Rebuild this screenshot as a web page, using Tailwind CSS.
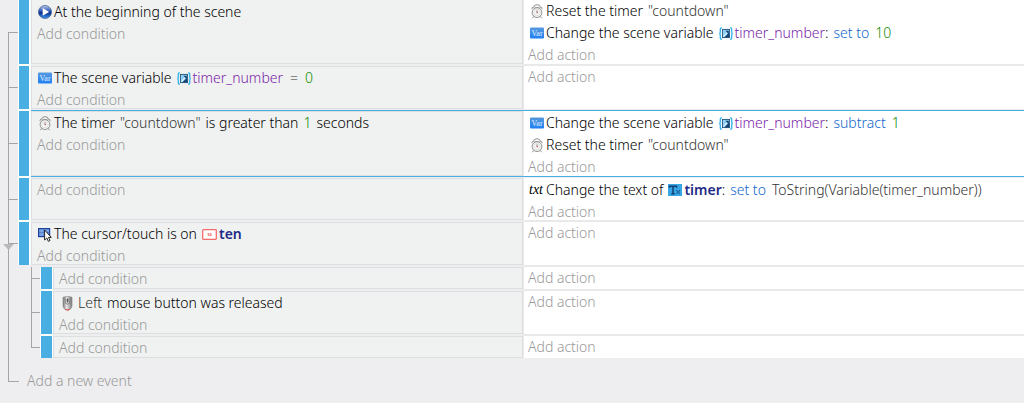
<!DOCTYPE html>
<html lang="en">
<head>
    <meta charset="UTF-8">
    <meta name="viewport" content="width=device-width, initial-scale=1.0">
    <title>Events sheet</title>
    <script src="https://cdn.jsdelivr.net/npm/@tailwindcss/browser@4"></script>
</head>
<body class="min-h-screen overflow-hidden bg-[#eeeef0] font-['Noto_Sans',sans-serif] text-[14px] leading-[22px] font-light text-black">
    <!-- icons -->
    <svg class="absolute h-0 w-0">
        <defs>
            <linearGradient id="blueBall" x1="0" y1="0" x2="0" y2="1">
                <stop offset="0" stop-color="#b9c9ea"/><stop offset=".45" stop-color="#2a55b4"/><stop offset=".55" stop-color="#0a2f8c"/><stop offset="1" stop-color="#3f9bf0"/>
            </linearGradient>
            <linearGradient id="blueBox" x1="0" y1="0" x2="0" y2="1">
                <stop offset="0" stop-color="#5599dd"/><stop offset="1" stop-color="#2080f4"/>
            </linearGradient>
            <linearGradient id="greyBody" x1="0" y1="0" x2="1" y2="0">
                <stop offset="0" stop-color="#777"/><stop offset=".4" stop-color="#e8e8e8"/><stop offset="1" stop-color="#777"/>
            </linearGradient>
        </defs>
        <symbol id="play" viewBox="0 0 15 15">
            <circle cx="7.5" cy="7.5" r="7" fill="url(#blueBall)" stroke="#4a5f94" stroke-width=".8"/>
            <path d="M5 3.2L12 7.4L5 11.6z" fill="#fff"/>
        </symbol>
        <symbol id="var" viewBox="0 0 14 12">
            <rect y=".5" width="14" height="11" rx="1" fill="url(#blueBox)"/>
            <text x="7" y="9" text-anchor="middle" font-family="Liberation Serif, serif" font-size="8" font-weight="400" fill="#e4f1ff">Var</text>
        </symbol>
        <symbol id="scenevar" viewBox="0 0 14 13">
            <path d="M3 .8H2.2Q1.3.8 1.3 2V5Q1.3 6.3.3 6.5Q1.3 6.7 1.3 8V11Q1.3 12.2 2.2 12.2H3M11 .8h.8q.9 0 .9 1.2V5q0 1.3 1 1.5q-1 .2-1 1.5V11q0 1.2-.9 1.2H11" fill="none" stroke="#35b3ec" stroke-width="1.3"/>
            <rect x="3.4" y="2.4" width="7.2" height="8.2" fill="#8fd0f4" stroke="#20507c" stroke-width=".9"/>
            <path d="M10.2 5.5V10.2H5.5z" fill="#14426e"/>
            <path d="M4.4 9.6L9.4 4.2" stroke="#fff" stroke-width="1"/>
            <path d="M6.4 3.8H9.8V7.2z" fill="#14426e"/>
        </symbol>
        <symbol id="timer" viewBox="0 0 12 15">
            <g fill="none" stroke="#858585" stroke-width=".9">
                <path d="M2.6 3.5Q2.6.7 6 .7T9.4 3.5M1 5.2Q.6 3.2 2.6 3M11 5.2Q11.4 3.2 9.4 3M3.5 3.8H8.5"/>
                <circle cx="6" cy="8.6" r="4.9" fill="#f6f6f6"/>
                <circle cx="6" cy="8.6" r="3.2" stroke="#c5c5c5" stroke-width=".5"/>
                <path d="M2.6 12.4L1.4 14.2M9.4 12.4L10.6 14.2M6 8.6V6.3"/>
            </g>
            <circle cx="6.3" cy="8.6" r=".8" fill="#c66"/>
        </symbol>
        <symbol id="cursor" viewBox="0 0 14 15">
            <rect x=".6" y="1.6" width="11" height="8" fill="#7ba4e4" stroke="#1c3f9c" stroke-width="1.2"/>
            <path d="M1 5.6H11.4M6 2V9.4" stroke="#466fc4" stroke-width=".7"/>
            <path d="M6.6 3V13L8.8 11L10.3 14.3L12 13.5L10.5 10.4H13.3z" fill="#fff" stroke="#111" stroke-width=".9"/>
        </symbol>
        <symbol id="ten" viewBox="0 0 15 11">
            <rect x=".7" y=".7" width="13.6" height="9.6" rx=".8" fill="#fff" stroke="#f56a6a" stroke-width="1.3"/>
            <text x="7.5" y="7.2" text-anchor="middle" font-family="Liberation Sans, sans-serif" font-size="4" font-weight="bold" fill="#e33">10</text>
        </symbol>
        <symbol id="textobj" viewBox="0 0 14 12">
            <rect width="14" height="12" fill="#35a7e4"/>
            <path d="M1.5 3.8V2.2H8.5V3.8M5 2.2V9.6M3.3 9.8H6.7" fill="none" stroke="#123f70" stroke-width="1.5"/>
            <path d="M8.3 6L12 10M12 6L8.3 10" stroke="#1c5c96" stroke-width="1.1"/>
        </symbol>
        <symbol id="mouse" viewBox="0 0 11 15">
            <path d="M1 1.2Q5.5-.4 10 1.2V9.5Q9.5 14 5.5 14T1 9.5z" fill="url(#greyBody)" stroke="#8a8a8a" stroke-width=".7"/>
            <path d="M3 1.3V5Q3.2 8.2 5.5 8.2T8 5V1.3" fill="none" stroke="#777" stroke-width=".9"/>
            <rect x="4.7" y="2.4" width="1.6" height="4" rx=".8" fill="#555"/>
            <path d="M3.4 13.4Q5.5 14.8 7.6 13.4" fill="none" stroke="#e33" stroke-width="1"/>
        </symbol>
    </svg>

    <main class="relative">
        <!-- main branch of the tree -->
        <div class="absolute top-8 bottom-[22px] left-2 w-px bg-[#a5a5a5]"></div>

        <section>
            <div class="flex flex-col gap-[2px]">
                <div class="grid grid-cols-[523fr_501fr]">
                    <div class="flex">
                        <div class="flex w-[18px] items-center pl-2"><span class="h-px w-full bg-[#a5a5a5]"></span></div>
                        <div class="w-[13px] border-r-2 border-l border-white bg-[#49aee2] shadow-[0_2px_0_#fff]"></div>
                        <div class="flex-1 border border-t-0 border-[#dddedf] bg-[#f0f2f1] pt-px pl-[5px]">
                            <p class="flex items-center pl-px"><svg class="mr-[2px] h-[14px] w-[14px]"><use href="#play"/></svg>At the beginning of the scene</p>
                            <button class="block h-[19px] text-[#999]">Add condition</button>
                        </div>
                    </div>
                    <div class="border-l border-[#e9e9ea] bg-white pb-px pl-1 shadow-[0_2px_0_#e9e9ea]">
                        <p class="flex items-center pl-px"><svg class="mr-[3px] ml-[2px] h-[15px] w-[12px]"><use href="#timer"/></svg>Reset the timer<span class="ml-[5px] text-[#333]">"countdown"</span></p>
                        <p class="flex items-center pl-px"><svg class="mr-[2px] ml-px h-[12px] w-[14px]"><use href="#var"/></svg>Change the scene variable<svg class="mr-[2px] ml-[5px] h-[13px] w-[14px]"><use href="#scenevar"/></svg><span class="text-[#7a22a8]">timer_number</span>:<span class="ml-[5px] text-[#0f66cc]">set to</span><span class="ml-[6px] text-[#108a00]">10</span></p>
                        <button class="block h-[19px] text-[#999]">Add action</button>
                    </div>
                </div>

                <div class="grid grid-cols-[523fr_501fr]">
                    <div class="flex">
                        <div class="flex w-[18px] items-center pl-2"><span class="h-px w-full bg-[#a5a5a5]"></span></div>
                        <div class="w-[13px] border-r-2 border-l border-white bg-[#49aee2] shadow-[0_2px_0_#fff]"></div>
                        <div class="flex-1 border border-[#dddedf] bg-[#f0f2f1] pl-[5px]">
                            <p class="flex items-center pl-px"><svg class="mr-[2px] h-[12px] w-[14px]"><use href="#var"/></svg>The scene variable<svg class="mr-[2px] ml-[5px] h-[13px] w-[14px]"><use href="#scenevar"/></svg><span class="text-[#7a22a8]">timer_number</span><span class="ml-[7px] text-[#333]">=</span><span class="ml-[7px] text-[#108a00]">0</span></p>
                            <button class="block h-[19px] text-[#999]">Add condition</button>
                        </div>
                    </div>
                    <div class="border-l border-[#e9e9ea] bg-white pl-1 shadow-[0_2px_0_#e9e9ea]">
                        <button class="block h-[19px] text-[#999]">Add action</button>
                    </div>
                </div>

                <!-- selected event -->
                <div class="grid grid-cols-[523fr_501fr]">
                    <div class="flex">
                        <div class="flex w-[18px] items-center pl-2"><span class="h-px w-full bg-[#a5a5a5]"></span></div>
                        <div class="w-[13px] border-r-2 border-l border-white bg-[#49aee2] shadow-[0_2px_0_#fff]"></div>
                        <div class="flex-1 border border-[#dddedf] bg-[#f0f2f1] pl-[5px] shadow-[0_-1px_0_#49aee2,0_1px_0_#49aee2]">
                            <p class="flex items-center pl-px"><svg class="mr-[3px] ml-px h-[15px] w-[12px]"><use href="#timer"/></svg>The timer<span class="ml-[5px] text-[#333]">"countdown"</span><span class="ml-[5px]">is greater than</span><span class="ml-[5px] text-[#108a00]">1</span><span class="ml-[5px]">seconds</span></p>
                            <button class="block h-[19px] text-[#999]">Add condition</button>
                        </div>
                    </div>
                    <div class="border-l border-[#e9e9ea] bg-white py-px pl-1 shadow-[0_-1px_0_#49aee2,0_1px_0_#49aee2]">
                        <p class="flex items-center pl-px"><svg class="mr-[2px] ml-px h-[12px] w-[14px]"><use href="#var"/></svg>Change the scene variable<svg class="mr-[2px] ml-[5px] h-[13px] w-[14px]"><use href="#scenevar"/></svg><span class="text-[#7a22a8]">timer_number</span>:<span class="ml-[5px] text-[#0f66cc]">subtract</span><span class="ml-[6px] text-[#108a00]">1</span></p>
                        <p class="flex items-center pl-px"><svg class="mr-[3px] ml-[2px] h-[15px] w-[12px]"><use href="#timer"/></svg>Reset the timer<span class="ml-[5px] text-[#333]">"countdown"</span></p>
                        <button class="block h-[19px] text-[#999]">Add action</button>
                    </div>
                </div>

                <div class="grid grid-cols-[523fr_501fr]">
                    <div class="flex">
                        <div class="flex w-[18px] items-center pl-2"><span class="h-px w-full bg-[#a5a5a5]"></span></div>
                        <div class="w-[13px] border-r-2 border-l border-white bg-[#49aee2] shadow-[0_2px_0_#fff]"></div>
                        <div class="flex-1 border border-[#dddedf] bg-[#f0f2f1] pl-[5px]">
                            <button class="block h-[19px] text-[#999]">Add condition</button>
                        </div>
                    </div>
                    <div class="border-l border-[#e9e9ea] bg-white pt-px pl-1 shadow-[0_2px_0_#e9e9ea]">
                        <p class="flex items-center pl-px"><span class="w-[17px] font-['Liberation_Serif',serif] font-normal italic">txt</span>Change the text of<svg class="mr-[2px] ml-[5px] h-[12px] w-[14px]"><use href="#textobj"/></svg><b class="font-semibold text-[#1f2b86]">timer</b>:<span class="ml-[5px] text-[#0f66cc]">set to</span><span class="ml-[6px] text-[#333]">ToString(Variable(timer_number))</span></p>
                        <button class="block h-[19px] text-[#999]">Add action</button>
                    </div>
                </div>

                <div class="grid grid-cols-[523fr_501fr]">
                    <div class="flex">
                        <div class="relative flex w-[18px] items-center pl-2">
                            <span class="h-px w-full bg-[#a5a5a5]"></span>
                            <svg class="absolute top-[22px] left-[3px] h-[6px] w-[11px]" viewBox="0 0 11 6"><path d="M0 0H11L5.5 6z" fill="#b9b9ba"/></svg>
                        </div>
                        <div class="w-[13px] border-r-2 border-l border-white bg-[#49aee2]"></div>
                        <div class="flex-1 border border-[#dddedf] bg-[#f0f2f1] pl-[5px]">
                            <p class="flex items-center pl-px"><svg class="mr-[2px] h-[15px] w-[14px]"><use href="#cursor"/></svg>The cursor/touch is on<svg class="mr-[2px] ml-[5px] h-[11px] w-[15px]"><use href="#ten"/></svg><b class="font-semibold text-[#1f2b86]">ten</b></p>
                            <button class="block h-[19px] text-[#999]">Add condition</button>
                        </div>
                    </div>
                    <div class="border-l border-[#e9e9ea] bg-white pl-1 shadow-[0_2px_0_#e9e9ea]">
                        <button class="block h-[19px] text-[#999]">Add action</button>
                    </div>
                </div>
            </div>

            <!-- sub events -->
            <div class="relative flex flex-col gap-[2px] pt-[2px]">
                <div class="absolute top-[2px] bottom-[11px] left-[31px] w-px bg-[#a5a5a5]"></div>

                <div class="grid min-h-[22px] grid-cols-[523fr_501fr]">
                    <div class="flex">
                        <div class="flex w-[40px] items-center pl-[31px]"><span class="h-px w-full bg-[#a5a5a5]"></span></div>
                        <div class="w-[13px] border-r border-l border-white bg-[#49aee2] shadow-[0_2px_0_#fff]"></div>
                        <div class="flex-1 border border-[#dddedf] bg-[#f0f2f1] pl-[5px]">
                            <button class="block h-[19px] text-[#999]">Add condition</button>
                        </div>
                    </div>
                    <div class="border-l border-[#e9e9ea] bg-white pl-1 shadow-[0_2px_0_#e9e9ea]">
                        <button class="block h-[19px] text-[#999]">Add action</button>
                    </div>
                </div>

                <div class="grid grid-cols-[523fr_501fr]">
                    <div class="flex">
                        <div class="flex w-[40px] items-center pl-[31px]"><span class="h-px w-full bg-[#a5a5a5]"></span></div>
                        <div class="w-[13px] border-r border-l border-white bg-[#49aee2] shadow-[0_2px_0_#fff]"></div>
                        <div class="flex-1 border border-[#dddedf] bg-[#f0f2f1] pl-[5px]">
                            <p class="flex items-center pl-px"><svg class="mr-[5px] ml-[2px] h-[15px] w-[11px]"><use href="#mouse"/></svg><span class="text-[#333]">Left</span><span class="ml-[5px]">mouse button was released</span></p>
                            <button class="block h-[19px] text-[#999]">Add condition</button>
                        </div>
                    </div>
                    <div class="border-l border-[#e9e9ea] bg-white pl-1 shadow-[0_2px_0_#e9e9ea]">
                        <button class="block h-[19px] text-[#999]">Add action</button>
                    </div>
                </div>

                <div class="grid min-h-[22px] grid-cols-[523fr_501fr]">
                    <div class="flex">
                        <div class="flex w-[40px] items-center pl-[31px]"><span class="h-px w-full bg-[#a5a5a5]"></span></div>
                        <div class="w-[13px] border-r border-l border-white bg-[#49aee2]"></div>
                        <div class="flex-1 border border-[#dddedf] bg-[#f0f2f1] pl-[5px]">
                            <button class="block h-[19px] text-[#999]">Add condition</button>
                        </div>
                    </div>
                    <div class="border-l border-[#e9e9ea] bg-white pl-1">
                        <button class="block h-[19px] text-[#999]">Add action</button>
                    </div>
                </div>
            </div>
        </section>

        <div class="flex items-center pt-3 pb-[11px] pl-2">
            <span class="mr-2 h-px w-[11px] bg-[#a5a5a5]"></span>
            <button class="text-[#999]">Add a new event</button>
        </div>
    </main>
</body>
</html>
